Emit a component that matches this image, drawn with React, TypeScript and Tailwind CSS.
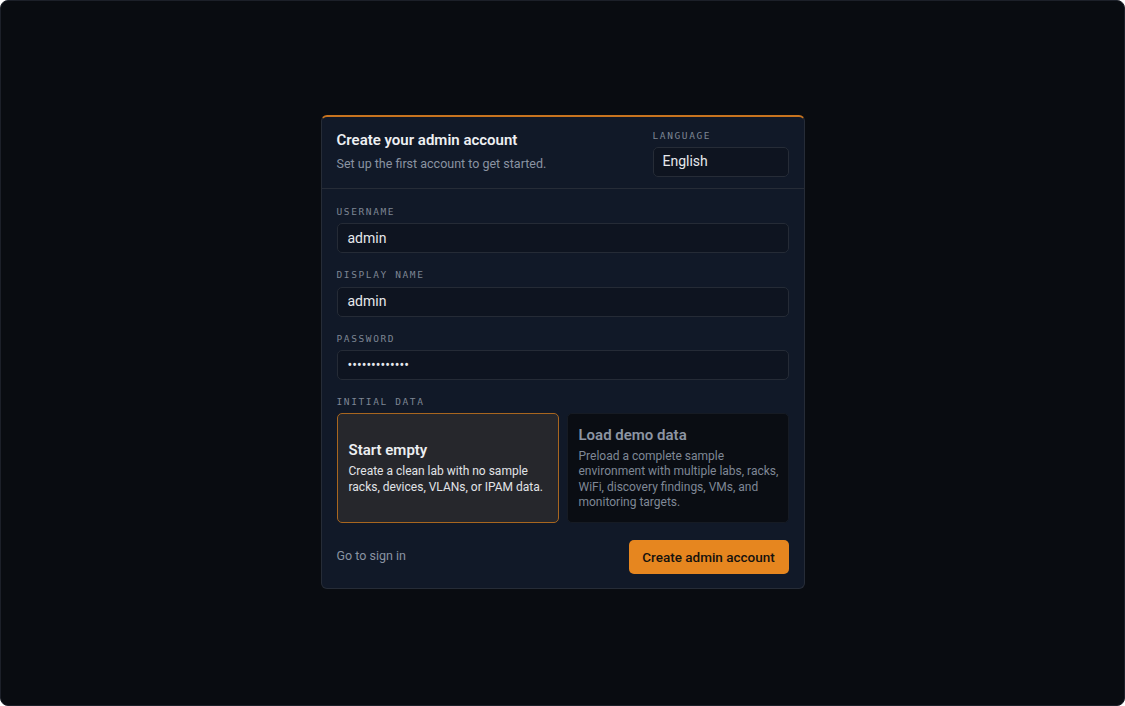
const sans = { fontFamily: 'Roboto, "Noto Sans", sans-serif' };
const mono = { fontFamily: '"DejaVu Sans Mono", "Liberation Mono", monospace' };

function Label({ children }: { children: React.ReactNode }) {
  return (
    <div style={mono} className="text-[9.5px] uppercase tracking-[0.17em] text-[#7d8593] leading-none">
      {children}
    </div>
  );
}

function Field({ label, value }: { label: string; value: string }) {
  return (
    <div className="flex flex-col gap-[7px]">
      <Label>{label}</Label>
      <div className="h-[30px] rounded-[5px] border border-[#252b36] bg-[#0e1420] px-[10px] flex items-center text-[14px] text-[#e6e8ec]">
        {value}
      </div>
    </div>
  );
}

export default function App() {
  return (
    <div style={sans} className="w-[1125px] h-[706px] bg-[#090c11] rounded-[8px] border border-[#1c2029] flex items-center justify-center">
      <div className="w-[484px] rounded-[6px] border border-[#262c37] border-t-2 border-t-[#c8741f] bg-[#111928] overflow-hidden -mt-[2px]">
        <div className="flex justify-between px-[15px] pt-[12px] pb-[11px] border-b border-[#262c37]">
          <div className="flex flex-col">
            <div className="text-[15px] font-semibold text-[#eef0f3] leading-[22px]">Create your admin account</div>
            <div className="text-[12.5px] text-[#8a93a2] mt-[4px]">Set up the first account to get started.</div>
          </div>
          <div className="flex flex-col gap-[6px] w-[136px] pt-[2px]">
            <Label>Language</Label>
            <div className="h-[30px] rounded-[5px] border border-[#262c37] bg-[#0e1420] px-[9px] flex items-center text-[14px] text-[#e6e8ec]">
              English
            </div>
          </div>
        </div>
        <div className="px-[15px] pt-[18px] pb-[14px] flex flex-col gap-[17px]">
          <Field label="Username" value="admin" />
          <Field label="Display name" value="admin" />
          <Field label="Password" value="•••••••••••••" />
          <div className="flex flex-col gap-[6px]">
            <Label>Initial data</Label>
            <div className="grid grid-cols-2 gap-[8px]">
              <div className="h-[110px] rounded-[5px] border border-[#a8661f] bg-[#26272c] px-[11px] flex flex-col justify-center">
                <div className="text-[15px] font-semibold text-[#eceef1] leading-[20px]">Start empty</div>
                <div className="text-[12px] leading-[15.5px] text-[#e1e3e7] mt-[4px]">
                  Create a clean lab with no sample racks, devices, VLANs, or IPAM data.
                </div>
              </div>
              <div className="h-[110px] rounded-[5px] border border-[#161b24] bg-[#0a0d13] pl-[11px] pr-[6px] flex flex-col justify-center">
                <div className="text-[15px] font-semibold text-[#8d95a3] leading-[20px]">Load demo data</div>
                <div className="text-[12px] leading-[15.5px] text-[#7f8896] mt-[4px]">
                  Preload a complete sample environment with multiple labs, racks, WiFi, discovery findings, VMs, and monitoring targets.
                </div>
              </div>
            </div>
          </div>
          <div className="flex items-center justify-between">
            <span className="text-[12.5px] text-[#8a93a2]">Go to sign in</span>
            <button className="h-[34px] w-[160px] rounded-[5px] bg-[#e6861f] text-[13.5px] font-medium text-[#15120e]">
              Create admin account
            </button>
          </div>
        </div>
      </div>
    </div>
  );
}
